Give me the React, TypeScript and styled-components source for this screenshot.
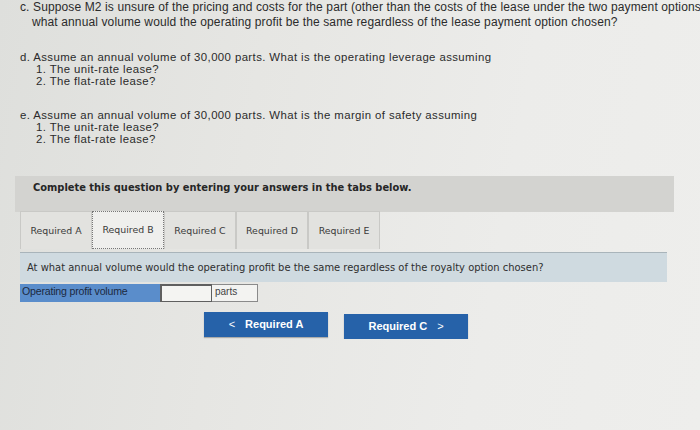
import styled, { createGlobalStyle } from 'styled-components';

const GlobalStyle = createGlobalStyle`
    html, body {
        margin: 0;
        padding: 0;
    }
    body {
        width: 700px;
        height: 430px;
        overflow: hidden;
        background: linear-gradient(100deg, #dedfdc 0%, #e6e6e3 35%, #ececea 70%, #eeeeec 100%);
        font-family: "Liberation Sans", Arial, sans-serif;
        color: #2b2b2b;
    }
`;

const Page = styled.div`
    padding: 0 0 0 20px;
    overflow: hidden;
`;

const Question = styled.div<{ $gap?: number }>`
    margin-top: ${({ $gap }) => $gap ?? 0}px;
    font-size: 12px;
    letter-spacing: 0.12px;
    line-height: 15px;
    white-space: nowrap;
`;

const SubLine = styled.div`
    padding-left: 12px;
`;

const List = styled.div<{ $gap: number }>`
    margin-top: ${({ $gap }) => $gap}px;
    font-size: 11.4px;
    letter-spacing: 0.4px;
    line-height: 11.8px;
    white-space: nowrap;
`;

const ListItem = styled.div`
    padding-left: 16px;
`;

const Instruction = styled.div`
    margin: 30px 26px 0 -5px;
    height: 36px;
    box-sizing: border-box;
    padding: 6px 0 0 18px;
    background: #d3d3d0;
    font-family: "DejaVu Sans", Verdana, sans-serif;
    font-weight: bold;
    font-size: 9.9px;
    line-height: 12px;
    color: #262626;
`;

const TabRow = styled.div`
    display: flex;
    margin-top: -1px;
`;

const Tab = styled.div<{ $active?: boolean }>`
    width: 72px;
    height: 38px;
    box-sizing: border-box;
    display: flex;
    align-items: center;
    justify-content: center;
    font-family: "DejaVu Sans", Verdana, sans-serif;
    font-size: 9.4px;
    color: #3a3a3a;
    background: ${({ $active }) => ($active ? '#efefed' : '#e2e2df')};
    border: ${({ $active }) => ($active ? '1px dotted #777' : '1px solid #c9c9c6')};
    border-bottom: ${({ $active }) => ($active ? '1px dotted #777' : 'none')};
`;

const QuestionBar = styled.div`
    margin: 3px 33px 0 0;
    height: 30px;
    box-sizing: border-box;
    padding: 0 0 0 7px;
    display: flex;
    align-items: center;
    background: #cfdae0;
    border-top: 1px solid #a9b4ba;
    font-family: "DejaVu Sans", Verdana, sans-serif;
    font-size: 9.95px;
    color: #2e2e2e;
    white-space: nowrap;
`;

const AnswerRow = styled.div`
    display: flex;
    margin-top: 2px;
    height: 18px;
`;

const AnswerLabel = styled.div`
    width: 140px;
    box-sizing: border-box;
    padding: 1px 0 0 2px;
    background: #5a8dcb;
    font-size: 10.6px;
    color: #1c2a3f;
    letter-spacing: -0.2px;
`;

const AnswerInput = styled.div`
    width: 52px;
    box-sizing: border-box;
    background: #f4f4f2;
    border: 1px solid #5f5f5f;
    border-left-width: 2px;
    border-top-width: 2px;
`;

const Unit = styled.div`
    width: 46px;
    box-sizing: border-box;
    padding: 1px 0 0 3px;
    background: #f3f3f1;
    border: 1px solid #8a8a8a;
    border-left: none;
    font-size: 10px;
    color: #444;
`;

const NavRow = styled.div`
    display: flex;
    gap: 16px;
    margin: 10px 0 0 184px;
`;

const NavButton = styled.div<{ $drop?: number }>`
    width: 124px;
    height: 25px;
    margin-top: ${({ $drop }) => $drop ?? 0}px;
    display: flex;
    align-items: center;
    justify-content: center;
    gap: 10px;
    background: #2662a9;
    color: #fff;
    font-family: "Liberation Sans", Arial, sans-serif;
    font-weight: bold;
    font-size: 11px;
    box-shadow: 0 1px 1px rgba(0, 0, 0, 0.25);
`;

const Chevron = styled.span`
    font-size: 11px;
    font-weight: normal;
`;

const tabs = ['Required A', 'Required B', 'Required C', 'Required D', 'Required E'];

export default function App() {
    return (
        <>
            <GlobalStyle />
            <Page>
                <Question>
                    c. Suppose M2 is unsure of the pricing and costs for the part (other than the costs of the lease under the two payment options
                    <SubLine>what annual volume would the operating profit be the same regardless of the lease payment option chosen?</SubLine>
                </Question>
                <List $gap={22}>
                    d. Assume an annual volume of 30,000 parts. What is the operating leverage assuming
                    <ListItem>1. The unit-rate lease?</ListItem>
                    <ListItem>2. The flat-rate lease?</ListItem>
                </List>
                <List $gap={23}>
                    e. Assume an annual volume of 30,000 parts. What is the margin of safety assuming
                    <ListItem>1. The unit-rate lease?</ListItem>
                    <ListItem>2. The flat-rate lease?</ListItem>
                </List>
                <Instruction>Complete this question by entering your answers in the tabs below.</Instruction>
                <TabRow>
                    {tabs.map((t) => (
                        <Tab key={t} $active={t === 'Required B'}>{t}</Tab>
                    ))}
                </TabRow>
                <QuestionBar>At what annual volume would the operating profit be the same regardless of the royalty option chosen?</QuestionBar>
                <AnswerRow>
                    <AnswerLabel>Operating profit volume</AnswerLabel>
                    <AnswerInput />
                    <Unit>parts</Unit>
                </AnswerRow>
                <NavRow>
                    <NavButton><Chevron>&lt;</Chevron>Required A</NavButton>
                    <NavButton $drop={2}>Required C<Chevron>&gt;</Chevron></NavButton>
                </NavRow>
            </Page>
        </>
    );
}
